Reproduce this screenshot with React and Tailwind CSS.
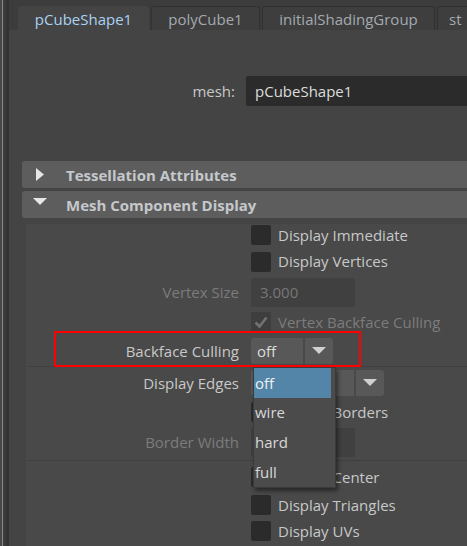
import React from "react";

const font = { fontFamily: '"Open Sans", "Noto Sans", sans-serif' };

function Checkbox({ checked, disabled }) {
  return (
    <div
      className={`w-[20px] h-[20px] rounded-[2px] flex items-center justify-center ${
        disabled ? "bg-[#3e3e3e]" : "bg-[#2b2b2b]"
      }`}
    >
      {checked && (
        <svg width="16" height="16" viewBox="0 0 16 16">
          <path d="M2.5 8.5 L6.5 12.5 L13.5 3.5" fill="none" stroke="#727272" strokeWidth="2.6" />
        </svg>
      )}
    </div>
  );
}

function Row({ h, label, disabledLabel, children }) {
  return (
    <div className={`flex items-center ${h}`}>
      <div
        className={`w-[213px] shrink-0 text-right text-[15px] ${
          disabledLabel ? "text-[#7c7c7c]" : "text-[#c8c8c8]"
        }`}
      >
        {label}
      </div>
      <div className="ml-[12px] flex items-center">{children}</div>
    </div>
  );
}

function CheckRow({ h, text, checked, disabled }) {
  return (
    <Row h={h} label="">
      <Checkbox checked={checked} disabled={disabled} />
      <span
        className={`ml-[7px] text-[15px] whitespace-nowrap ${
          disabled ? "text-[#7c7c7c]" : "text-[#c8c8c8]"
        }`}
      >
        {text}
      </span>
    </Row>
  );
}

function Arrow() {
  return (
    <svg width="14" height="8" viewBox="0 0 14 8">
      <path d="M0 0 L14 0 L7 7 Z" fill="#d0d0d0" />
    </svg>
  );
}

function Dropdown({ w, value }) {
  return (
    <div className="flex gap-[2px]">
      <div className={`${w} h-[26px] bg-[#585858] rounded-l-[3px] flex items-center pl-[6px] text-[15px] text-[#dcdcdc]`}>
        {value}
      </div>
      <div className="w-[28px] h-[26px] bg-[#585858] rounded-r-[3px] flex items-center justify-center">
        <Arrow />
      </div>
    </div>
  );
}

function Sep() {
  return <div className="h-px ml-[2px] my-[1px] bg-[#3f3f3f]" />;
}

export default function App() {
  return (
    <div className="w-[467px] h-[546px] bg-[#444444] overflow-hidden relative flex" style={font}>
      {/* left strip */}
      <div className="w-[9px] h-full flex shrink-0">
        <div className="w-[2px] h-full bg-[#474747]" />
        <div className="w-px h-full bg-[#8a8a8a]" />
        <div className="w-[3px] h-full bg-[#3b3b3b]" />
        <div className="w-[3px] h-full bg-[#333333]" />
      </div>

      <div className="flex-1 flex flex-col min-w-0">
        {/* tab bar */}
        <div className="h-[30px] bg-[#3c3c3c] pt-[6px] pl-[9px] flex gap-[2px] shrink-0 overflow-hidden">
          <div className="w-[131px] shrink-0 h-[24px] bg-[#444444] rounded-t-[3px] flex items-center justify-center pt-[2px] text-[15px] text-[#a9d2f2]">
            pCubeShape1
          </div>
          <div className="w-[109px] shrink-0 h-[24px] bg-[#3e3e3e] border border-b-0 border-[#313131] rounded-t-[3px] flex items-center justify-center pt-[2px] text-[15px] text-[#a3aab0]">
            polyCube1
          </div>
          <div className="w-[173px] shrink-0 h-[24px] bg-[#3e3e3e] border border-b-0 border-[#313131] rounded-t-[3px] flex items-center justify-center pt-[2px] text-[15px] text-[#a3aab0]">
            initialShadingGroup
          </div>
          <div className="w-[60px] shrink-0 h-[24px] bg-[#3e3e3e] border border-b-0 border-[#313131] rounded-t-[3px] flex items-center pl-[11px] pt-[2px] text-[15px] text-[#a3aab0]">
            st
          </div>
        </div>

        {/* mesh row */}
        <div className="mt-[46px] flex items-center h-[30px]">
          <div className="w-[226px] text-right text-[15px] text-[#c8c8c8] pt-[1px]">mesh:</div>
          <div className="ml-[11px] flex-1 h-[30px] bg-[#2b2b2b] rounded-l-[2px] flex items-center pl-[9px] pt-[1px] text-[15px] text-[#dcdcdc]">
            pCubeShape1
          </div>
        </div>

        {/* frame headers */}
        <div className="mt-[55px] ml-[13px] flex flex-col gap-[3px]">
          <div className="h-[27px] bg-[#5d5d5d] rounded-l-[3px] flex items-center">
            <svg className="ml-[14px]" width="8" height="13" viewBox="0 0 8 13">
              <path d="M0 0 L8 6.5 L0 13 Z" fill="#e6e6e6" />
            </svg>
            <span className="ml-[22px] pt-[1px] text-[15px] font-bold text-[#c5c8cb]">Tessellation Attributes</span>
          </div>
          <div className="h-[27px] bg-[#5d5d5d] rounded-l-[3px] flex items-center">
            <svg className="ml-[11px] mb-[6px]" width="14" height="7" viewBox="0 0 14 7">
              <path d="M0 0 L14 0 L7 7 Z" fill="#e6e6e6" />
            </svg>
            <span className="ml-[19px] pt-[1px] text-[15px] font-bold text-[#c5c8cb]">Mesh Component Display</span>
          </div>
        </div>

        {/* content */}
        <div className="mt-[6px] ml-[17px] flex-1 bg-[#494949] flex flex-col">
          <CheckRow h="h-[22px]" text="Display Immediate" />
          <CheckRow h="h-[31px]" text="Display Vertices" />
          <Row h="h-[30px]" label="Vertex Size" disabledLabel>
            <div className="w-[104px] h-[29px] bg-[#404040] rounded-[2px] flex items-center pl-[9px] text-[15px] text-[#777777]">
              3.000
            </div>
          </Row>
          <CheckRow h="h-[30px]" text="Vertex Backface Culling" checked disabled />
          <Row h="h-[28px]" label="Backface Culling">
            <Dropdown w="w-[52px]" value="off" />
          </Row>
          <Sep />
          <Row h="h-[30px]" label="Display Edges">
            <Dropdown w="w-[103px]" value="" />
          </Row>
          <CheckRow h="h-[28px]" text="Display Borders" />
          <Row h="h-[33px]" label="Border Width" disabledLabel>
            <div className="w-[104px] h-[29px] bg-[#404040] rounded-[2px]" />
          </Row>
          <Sep />
          <CheckRow h="h-[30px]" text="Display Center" />
          <CheckRow h="h-[26px]" text="Display Triangles" />
          <CheckRow h="h-[26px]" text="Display UVs" />
        </div>
      </div>

      {/* red highlight box */}
      <div className="absolute left-[54px] top-[331px] w-[307px] h-[36px] border-2 border-[#ff0000]" />

      {/* popup menu */}
      <div className="absolute left-[253px] top-[367px] w-[83px] h-[121px] bg-[#4b4b4b] border border-[#3a3a3a] shadow-[2px_3px_4px_rgba(0,0,0,0.45)] flex flex-col pr-[4px]">
        <div className="h-[30px] bg-[#5285a7] flex items-center pl-[1px] text-[15px] text-[#f0f0f0]">off</div>
        <div className="h-[30px] flex items-center pl-[1px] text-[15px] text-[#d8d8d8]">wire</div>
        <div className="h-[30px] flex items-center pl-[1px] text-[15px] text-[#d8d8d8]">hard</div>
        <div className="h-[30px] flex items-center pl-[1px] text-[15px] text-[#d8d8d8]">full</div>
      </div>
    </div>
  );
}
